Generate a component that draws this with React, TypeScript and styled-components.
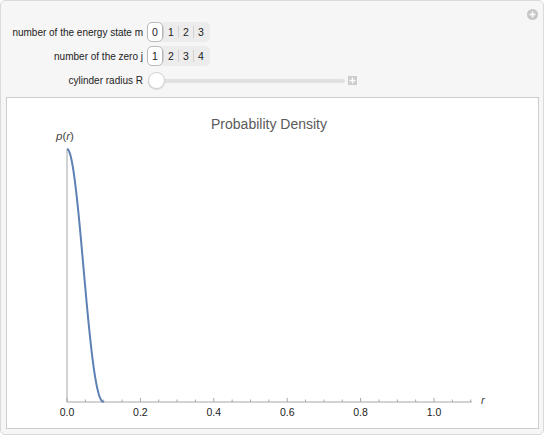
import React from 'react';
import styled, { createGlobalStyle } from 'styled-components';

const GlobalStyle = createGlobalStyle`
  html, body {
    margin: 0;
    padding: 0;
    background: #ffffff;
  }
  body {
    font-family: 'Liberation Sans', Arial, sans-serif;
  }
`;

// Bessel J0 by its power series; enough terms for x <= 3
function besselJ0(x: number): number {
  let sum = 0;
  let term = 1;
  for (let k = 0; k < 20; k++) {
    if (k > 0) term *= -(x * x) / 4 / (k * k);
    sum += term;
  }
  return sum;
}

const R = 0.1;
const ZERO = 2.404825557695773;

// plot coordinates (inside the svg)
const X0 = 60;
const Y0 = 304;
const SCALE_X = 367;
const HEIGHT = 253;

const px = (r: number) => X0 + r * SCALE_X;

function curvePath(): string {
  const pts: string[] = [];
  const n = 80;
  for (let i = 0; i <= n; i++) {
    const r = (R * i) / n;
    const v = besselJ0((ZERO * r) / R);
    const y = Y0 - HEIGHT * v * v;
    pts.push(`${i === 0 ? 'M' : 'L'}${px(r).toFixed(2)},${y.toFixed(2)}`);
  }
  return pts.join(' ');
}

const majors = [0, 0.2, 0.4, 0.6, 0.8, 1.0];
const minors = Array.from({ length: 23 }, (_, i) => i * 0.05).filter(
  (v) => Math.abs(v / 0.2 - Math.round(v / 0.2)) > 1e-6,
);

const FONT = 'Liberation Sans, Arial, sans-serif';

function App() {
  const [m, setM] = React.useState(0);
  const [j, setJ] = React.useState(1);

  return (
    <>
      <GlobalStyle />
      <Frame>
        <CornerButton aria-label="more">
          <svg width="11" height="11" viewBox="0 0 11 11">
            <circle cx="5.5" cy="5.5" r="5.5" fill="#c6c6c6" />
            <path d="M5.5 2.5v6M2.5 5.5h6" stroke="#ffffff" strokeWidth="1.6" />
          </svg>
        </CornerButton>
        <Controls>
          <Label>number of the energy state m</Label>
          <SetterBar>
            {[0, 1, 2, 3].map((v) => (
              <Segment key={v} selected={v === m} onClick={() => setM(v)}>
                {v}
              </Segment>
            ))}
          </SetterBar>

          <Label>number of the zero j</Label>
          <SetterBar>
            {[1, 2, 3, 4].map((v) => (
              <Segment key={v} selected={v === j} onClick={() => setJ(v)}>
                {v}
              </Segment>
            ))}
          </SetterBar>

          <Label>cylinder radius R</Label>
          <SliderRow>
            <Track>
              <Knob />
            </Track>
            <PlusBox>
              <svg width="9" height="9" viewBox="0 0 9 9">
                <rect width="9" height="9" fill="#cdcdcd" />
                <path d="M4.5 1.5v6M1.5 4.5h6" stroke="#ffffff" strokeWidth="1.4" />
              </svg>
            </PlusBox>
          </SliderRow>
        </Controls>

        <PlotPanel>
          <svg width="531" height="329" viewBox="0 0 531 329">
            <text x="262" y="31" textAnchor="middle" fontSize="14" fill="#5a5a5a" fontFamily={FONT}>
              Probability Density
            </text>
            <text x="49" y="42" fontSize="11.5" fill="#444" fontFamily={FONT}>
              <tspan fontStyle="italic">p</tspan>(<tspan fontStyle="italic">r</tspan>)
            </text>
            <text x="474" y="306" fontSize="11.5" fontStyle="italic" fill="#444" fontFamily={FONT}>
              r
            </text>

            <line x1={X0} y1={51} x2={X0} y2={Y0} stroke="#a6a6a6" strokeWidth="1" />
            <line x1={X0} y1={Y0} x2={px(1.1) + 1} y2={Y0} stroke="#a6a6a6" strokeWidth="1" />
            {majors.map((v) => (
              <line key={`M${v}`} x1={px(v)} y1={Y0} x2={px(v)} y2={Y0 - 4} stroke="#a6a6a6" strokeWidth="1" />
            ))}
            {minors.map((v) => (
              <line key={`m${v}`} x1={px(v)} y1={Y0} x2={px(v)} y2={Y0 - 2.5} stroke="#a6a6a6" strokeWidth="1" />
            ))}
            {majors.map((v) => (
              <text key={`t${v}`} x={px(v)} y={Y0 + 14} textAnchor="middle" fontSize="10.5" fill="#222" fontFamily={FONT}>
                {v.toFixed(1)}
              </text>
            ))}

            <path d={curvePath()} fill="none" stroke="#5e81b5" strokeWidth="2" strokeLinejoin="round" />
          </svg>
        </PlotPanel>
      </Frame>
    </>
  );
}
export default App;

const Frame = styled.div`
  position: relative;
  box-sizing: border-box;
  width: 544px;
  height: 435px;
  border: 1px solid #dadada;
  border-radius: 5px;
  background: #f6f6f6;
  padding: 19px 4px 5px 5px;
  display: flex;
  flex-direction: column;
  gap: 4px;
`;

const CornerButton = styled.div`
  position: absolute;
  top: 8px;
  right: 5px;
  width: 11px;
  height: 11px;
  line-height: 0;
  cursor: pointer;
`;

const Controls = styled.div`
  display: grid;
  grid-template-columns: 137px auto;
  grid-template-rows: 24px 24px 25px;
  column-gap: 4px;
  align-items: center;
`;

const Label = styled.div`
  text-align: right;
  font-size: 10px;
  color: #222;
  white-space: nowrap;
`;

const SetterBar = styled.div`
  display: flex;
  align-items: center;
  justify-self: start;
  height: 20px;
  padding: 0 2px 0 0;
  border-radius: 5px;
  background: #ececec;
  font-size: 10.5px;
  color: #222;
`;

const Segment = styled.div<{ selected: boolean }>`
  box-sizing: border-box;
  width: ${({ selected }) => (selected ? '16px' : '15px')};
  height: ${({ selected }) => (selected ? '20px' : '12px')};
  display: flex;
  align-items: center;
  justify-content: center;
  cursor: pointer;
  background: ${({ selected }) => (selected ? '#ffffff' : 'transparent')};
  border: ${({ selected }) => (selected ? '1px solid #b9b9b9' : 'none')};
  border-radius: ${({ selected }) => (selected ? '5px' : '0')};
  & + & {
    border-left: ${({ selected }) => (selected ? '1px solid #b9b9b9' : '1px solid #d2d2d2')};
  }
`;

const SliderRow = styled.div`
  display: flex;
  align-items: center;
  gap: 3px;
  padding-left: 1px;
`;

const Track = styled.div`
  position: relative;
  width: 197px;
  height: 4px;
  border-radius: 2px;
  background: #e1e1e1;
`;

const Knob = styled.div`
  position: absolute;
  left: 0;
  top: -7px;
  box-sizing: border-box;
  width: 17px;
  height: 17px;
  border-radius: 50%;
  background: #ffffff;
  border: 1px solid #d0d0d0;
  box-shadow: 0 1px 1px rgba(0, 0, 0, 0.12);
`;

const PlusBox = styled.div`
  line-height: 0;
  cursor: pointer;
`;

const PlotPanel = styled.div`
  flex: 1;
  background: #ffffff;
  border: 1px solid #cdcdcd;
  line-height: 0;
`;
